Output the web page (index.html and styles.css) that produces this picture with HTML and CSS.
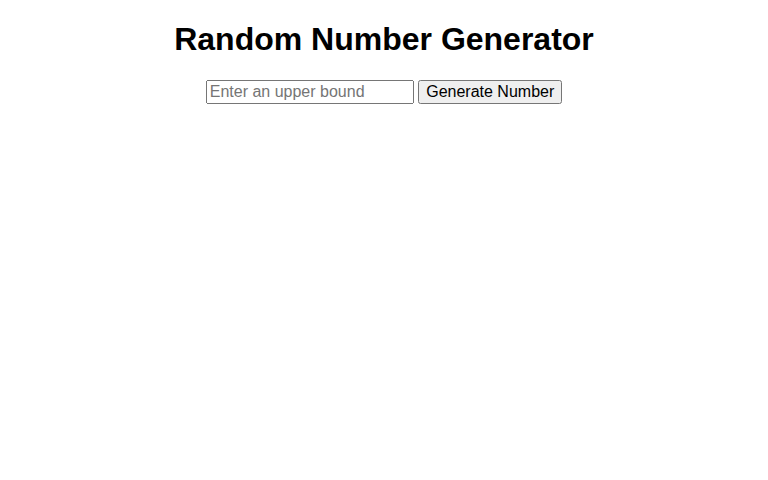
FILE: index.html
```html
<!DOCTYPE html>
<html>
<head>
    <title>Random Number Generator</title>
    <link rel="stylesheet" href="styles.css">
</head>
<body>
    <div class="container">
        <h1>Random Number Generator</h1>
        <input type="number" id="upperBound" placeholder="Enter an upper bound">
        <button id="btnGenerate">Generate Number</button>
        <p id="result"></p>
    </div>
</body>
</html>
```

FILE: styles.css
```css
body {
    margin: 0;
    font-family: "Liberation Sans", Arial, sans-serif;
}
.container {
    text-align: center;
}
h1 {
    font-size: 32px;
    margin: 21px 0 22px;
}
#upperBound {
    font-family: "Liberation Sans", Arial, sans-serif;
    font-size: 16px;
    width: 200px;
}
#btnGenerate {
    font-family: "Liberation Sans", Arial, sans-serif;
    font-size: 16px;
}
```
